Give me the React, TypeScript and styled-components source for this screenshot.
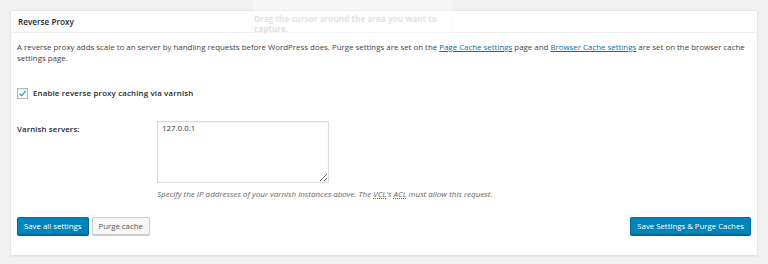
import styled, { createGlobalStyle } from "styled-components";

const GlobalStyle = createGlobalStyle`
  html, body {
    margin: 0;
    padding: 0;
    background: #f1f1f1;
  }
  body {
    font-family: "Open Sans", "Noto Sans", sans-serif;
    color: #444;
    font-size: 7.9px;
  }
`;

const Page = styled.div`
  position: relative;
  width: 768px;
  height: 264px;
  box-sizing: border-box;
  padding: 10px 10px 0 10px;
`;

const Panel = styled.div`
  background: #fff;
  border: 1px solid #e5e5e5;
  box-shadow: 0 1px 1px rgba(0, 0, 0, 0.04);
`;

const PanelTitle = styled.h2`
  margin: 0;
  height: 21px;
  line-height: 21px;
  padding: 0 7px;
  border-bottom: 1px solid #eee;
  font-size: 8.2px;
  font-weight: 600;
  color: #23282d;
`;

const PanelBody = styled.div`
  padding: 9px 6px 20px 6px;
`;

const Description = styled.p`
  margin: 0;
  line-height: 11.4px;
  color: #444;
`;

const Link = styled.a`
  color: #0073aa;
  text-decoration: underline;
`;

const CheckRow = styled.label`
  display: flex;
  align-items: center;
  gap: 5px;
  margin-top: 23px;
  font-weight: 600;
  letter-spacing: 0.15px;
  color: #23282d;
`;

const CheckBox = styled.span`
  width: 9px;
  height: 9px;
  border: 1px solid #b4b9be;
  background: #fff;
  box-shadow: inset 0 1px 2px rgba(0, 0, 0, 0.1);
  display: flex;
  align-items: center;
  justify-content: center;
`;

const FieldRow = styled.div`
  display: grid;
  grid-template-columns: 140px 1fr;
  margin-top: 22px;
`;

const FieldLabel = styled.label`
  font-weight: 600;
  letter-spacing: 0.1px;
  color: #23282d;
  padding-top: 3px;
`;

const TextArea = styled.textarea`
  display: block;
  width: 172px;
  height: 62px;
  box-sizing: border-box;
  margin: 0;
  padding: 1px 4px;
  border: 1px solid #ddd;
  box-shadow: inset 0 1px 2px rgba(0, 0, 0, 0.07);
  font-family: "Open Sans", "Noto Sans", sans-serif;
  font-size: 7.9px;
  line-height: 11px;
  color: #32373c;
  outline: none;
`;

const Hint = styled.p`
  margin: 5px 0 0 0;
  font-style: italic;
  font-size: 8px;
  color: #666;
  line-height: 11px;
`;

const Abbr = styled.abbr`
  text-decoration: underline dotted;
`;

const ButtonBar = styled.div`
  display: flex;
  justify-content: space-between;
  margin-top: 18px;
`;

const ButtonGroup = styled.div`
  display: flex;
  gap: 3px;
`;

const Button = styled.button<{ $primary?: boolean }>`
  height: 18px;
  padding: 0 6px;
  border-radius: 2px;
  border-width: 1px;
  border-style: solid;
  font-family: "Open Sans", "Noto Sans", sans-serif;
  font-size: 7.8px;
  line-height: 16px;
  cursor: pointer;
  background: ${(p) => (p.$primary ? "#0085ba" : "#f7f7f7")};
  color: ${(p) => (p.$primary ? "#fff" : "#555")};
  border-color: ${(p) => (p.$primary ? "#0073aa #006799 #006799" : "#ccc")};
  box-shadow: ${(p) => (p.$primary ? "0 1px 0 #006799" : "0 1px 0 #ccc")};
`;

const CaptureHint = styled.div`
  position: absolute;
  left: 252px;
  top: 0;
  width: 201px;
  height: 33px;
  box-sizing: border-box;
  padding: 14px 0 0 1px;
  background: rgba(255, 255, 255, 0.4);
  border-left: 1px solid rgba(0, 0, 0, 0.02);
  border-right: 1px solid rgba(0, 0, 0, 0.02);
  font-size: 8.2px;
  font-weight: 700;
  line-height: 10px;
  color: #e2e2e2;
  pointer-events: none;
`;

export default function App() {
  return (
    <Page>
      <GlobalStyle />
      <Panel>
        <PanelTitle>Reverse Proxy</PanelTitle>
        <PanelBody>
          <Description>
            A reverse proxy adds scale to an server by handling requests before
            WordPress does. Purge settings are set on the{" "}
            <Link href="#">Page Cache settings</Link> page and{" "}
            <Link href="#">Browser Cache settings</Link> are set on the browser
            cache settings page.
          </Description>
          <CheckRow>
            <CheckBox>
              <svg width="9" height="9" viewBox="0 0 20 20">
                <path
                  d="M3.5 10.5 L8 15 L17 4"
                  fill="none"
                  stroke="#1e8cbe"
                  strokeWidth="2.6"
                />
              </svg>
            </CheckBox>
            Enable reverse proxy caching via varnish
          </CheckRow>
          <FieldRow>
            <FieldLabel>Varnish servers:</FieldLabel>
            <div>
              <TextArea defaultValue="127.0.0.1" />
              <Hint>
                Specify the IP addresses of your varnish instances above. The{" "}
                <Abbr>VCL</Abbr>'s <Abbr>ACL</Abbr> must allow this request.
              </Hint>
            </div>
          </FieldRow>
          <ButtonBar>
            <ButtonGroup>
              <Button $primary>Save all settings</Button>
              <Button>Purge cache</Button>
            </ButtonGroup>
            <Button $primary>Save Settings &amp; Purge Caches</Button>
          </ButtonBar>
        </PanelBody>
      </Panel>
      <CaptureHint>
        Drag the cursor around the area you want to
        <br />
        capture.
      </CaptureHint>
    </Page>
  );
}
